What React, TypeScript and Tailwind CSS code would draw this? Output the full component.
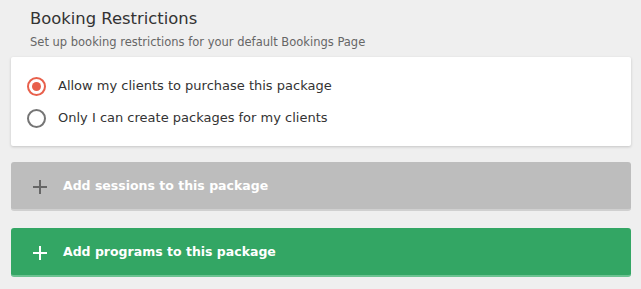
import React from "react";

function Plus({ className }: { className: string }) {
  return (
    <svg width="16" height="16" viewBox="0 0 16 16" className={className}>
      <path d="M8 1v14M1 8h14" stroke="currentColor" strokeWidth="2" />
    </svg>
  );
}

export default function App() {
  return (
    <div className="w-[641px] h-[289px] bg-[#efefef] pt-[9px] pl-[11px] pr-[10px] font-['DejaVu_Sans',sans-serif]">
      <div className="pl-[19px]">
        <div className="text-[16.4px] leading-[20px] text-[#333]">Booking Restrictions</div>
        <div className="text-[11.5px] leading-[16px] text-[#666] mt-[5px]">
          Set up booking restrictions for your default Bookings Page
        </div>
      </div>
      <div className="mt-[7px] bg-white rounded-[2px] shadow-[0_1px_3px_rgba(0,0,0,0.18)] h-[89px] pt-[21px] pl-[16px] flex flex-col gap-[16px]">
        <label className="flex items-center gap-[12px] h-[16px]">
          <span className="w-[19px] h-[19px] rounded-full border-2 border-[#e8604c] flex items-center justify-center">
            <span className="w-[9px] h-[9px] rounded-full bg-[#e8604c]" />
          </span>
          <span className="text-[13px] text-[#333]">Allow my clients to purchase this package</span>
        </label>
        <label className="flex items-center gap-[12px] h-[16px]">
          <span className="w-[19px] h-[19px] rounded-full border-2 border-[#757575]" />
          <span className="text-[13px] text-[#333]">Only I can create packages for my clients</span>
        </label>
      </div>
      <div className="mt-[16px] h-[49px] rounded-[3px] bg-[#bdbdbd] border-b-2 border-[#d0d0d0] flex items-center pt-[2px] pl-[21px] gap-[15px]">
        <Plus className="text-[#666]" />
        <span className="text-[12.5px] font-bold text-white">Add sessions to this package</span>
      </div>
      <div className="mt-[17px] h-[49px] rounded-[3px] bg-[#33a664] border-b-2 border-[#6cc291] flex items-center pt-[2px] pl-[21px] gap-[15px]">
        <Plus className="text-white" />
        <span className="text-[12.5px] font-bold text-white">Add programs to this package</span>
      </div>
    </div>
  );
}
